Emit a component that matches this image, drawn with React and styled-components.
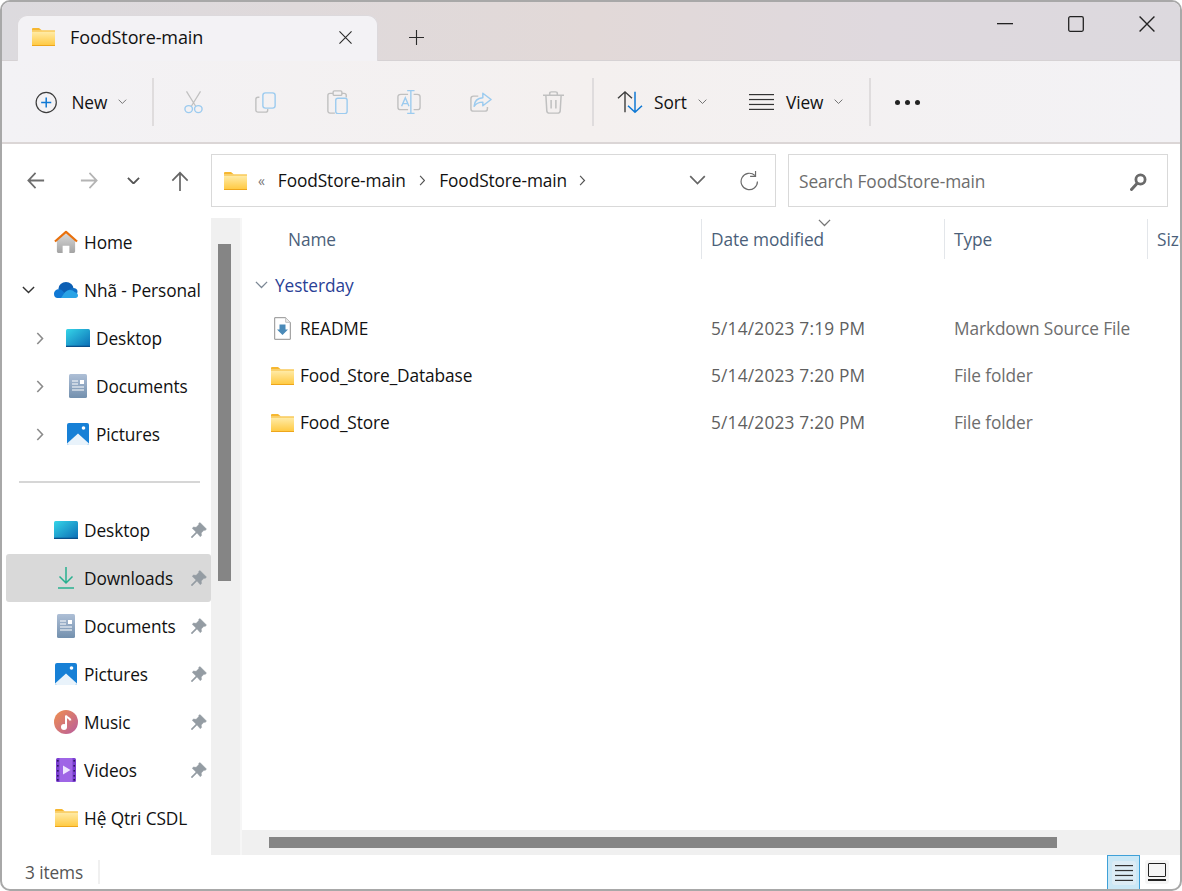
import styled, { createGlobalStyle } from "styled-components";

const GlobalStyle = createGlobalStyle`
  html, body {
    margin: 0;
    padding: 0;
    background: #fff;
  }
  * {
    box-sizing: border-box;
  }
`;

/* ---------- icons ---------- */

let uid = 0;

function Folder({ w = 23, h = 18 }) {
  const id = `folder${uid++}`;
  return (
    <svg width={w} height={h} viewBox="0 0 23 18">
      <defs>
        <linearGradient id={id} x1="0" y1="0" x2="0" y2="1">
          <stop offset="0" stopColor="#ffeeb0" />
          <stop offset="1" stopColor="#ffc83d" />
        </linearGradient>
      </defs>
      <path d="M0 1a1 1 0 0 1 1-1h6l3 2.5H0z" fill="#f6b730" />
      <rect x="0" y="2.5" width="23" height="15.5" rx="0.5" fill={`url(#${id})`} />
      <rect x="0" y="2.5" width="23" height="1" fill="#f6b730" />
      <rect x="0" y="17" width="23" height="1" fill="#eea61b" />
    </svg>
  );
}

function Close({ size = 14, color = "#2a2a2a" }) {
  return (
    <svg width={size} height={size} viewBox="0 0 14 14">
      <path d="M.5.5l13 13M13.5.5l-13 13" stroke={color} strokeWidth="1.2" fill="none" />
    </svg>
  );
}

function Caret({ size = 10, color = "#666", sw = 1 }) {
  return (
    <svg width={size} height={size * 0.6} viewBox="0 0 10 6">
      <path d="M.7.7L5 5l4.3-4.3" stroke={color} strokeWidth={sw} fill="none" />
    </svg>
  );
}

function CaretRight({ color = "#8b8b8b", sw = 1.6, h = 13 }) {
  return (
    <svg width={h * 0.6} height={h} viewBox="0 0 6 10">
      <path d="M1 .8L5 5 1 9.2" stroke={color} strokeWidth={sw * 0.77} fill="none" />
    </svg>
  );
}

const NewIcon = () => (
  <svg width="23" height="23" viewBox="0 0 24 24">
    <circle cx="12" cy="12" r="10.8" fill="none" stroke="#3d3d3d" strokeWidth="1.3" />
    <path d="M12 6.6v10.8M6.6 12h10.8" stroke="#0f78d4" strokeWidth="1.6" />
  </svg>
);

const G = "#c0c0c0";
const B = "#9ccbef";

const CutIcon = () => (
  <svg width="21" height="23" viewBox="0 0 24 28" preserveAspectRatio="none">
    <path d="M4 .5l10.5 18M20 .5L9.5 18.5" stroke={G} strokeWidth="1.4" fill="none" />
    <circle cx="6.5" cy="22" r="4.3" fill="none" stroke={B} strokeWidth="1.6" />
    <circle cx="17.5" cy="22" r="4.3" fill="none" stroke={B} strokeWidth="1.6" />
  </svg>
);

const CopyIcon = () => (
  <svg width="21" height="21" viewBox="0 0 24 26" preserveAspectRatio="none">
    <path d="M5 6.5H3.5A2.5 2.5 0 0 0 1 9v13.5A2.5 2.5 0 0 0 3.5 25H12a2.5 2.5 0 0 0 2.5-2.5V21" fill="none" stroke={G} strokeWidth="1.6" />
    <rect x="9" y="1" width="14" height="19" rx="3" fill="none" stroke={B} strokeWidth="1.6" />
  </svg>
);

const PasteIcon = () => (
  <svg width="21" height="24" viewBox="0 0 24 29" preserveAspectRatio="none">
    <path d="M7 4H3.5A2.5 2.5 0 0 0 1 6.5v19A2.5 2.5 0 0 0 3.5 28H9M17 4h2.5A2.5 2.5 0 0 1 22 6.5V9" fill="none" stroke={G} strokeWidth="1.6" />
    <rect x="7" y="1" width="10" height="5.5" rx="1.5" fill="none" stroke={G} strokeWidth="1.6" />
    <rect x="10" y="10" width="13" height="18.5" rx="2.5" fill="none" stroke={B} strokeWidth="1.6" />
  </svg>
);

const RenameIcon = () => (
  <svg width="24" height="24" viewBox="0 0 26 28" preserveAspectRatio="none">
    <path d="M12 5H4a3 3 0 0 0-3 3v12a3 3 0 0 0 3 3h8M18 5h4a3 3 0 0 1 3 3v12a3 3 0 0 1-3 3h-4" fill="none" stroke={G} strokeWidth="1.5" />
    <path d="M11 .7h8M11 27.3h8M15 .7v26.6" fill="none" stroke={B} strokeWidth="1.5" />
    <path d="M5 19l4-10 4 10M6.3 16h5.4" fill="none" stroke={B} strokeWidth="1.5" />
  </svg>
);

const ShareIcon = () => (
  <svg width="22" height="20" viewBox="0 0 24 24" preserveAspectRatio="none">
    <path d="M9 5H4a3 3 0 0 0-3 3v12a3 3 0 0 0 3 3h12a3 3 0 0 0 3-3v-2" fill="none" stroke={G} strokeWidth="1.6" />
    <path d="M14 1.500l9 7.500-9 7.500v-4.300c-4.500 0-7.500 1.500-9.500 5 .3-6 3.500-10 9.500-10.300z" fill="none" stroke={B} strokeWidth="1.6" strokeLinejoin="round" />
  </svg>
);

const DeleteIcon = () => (
  <svg width="21" height="23" viewBox="0 0 22 27" preserveAspectRatio="none">
    <path d="M0 5h22M7 5V3a2 2 0 0 1 2-2h4a2 2 0 0 1 2 2v2M3 5l1 18.500A3 3 0 0 0 7 26h8a3 3 0 0 0 3-2.500L19 5M8.500 10.500v10M13.500 10.500v10" fill="none" stroke={G} strokeWidth="1.6" />
  </svg>
);

const SortIcon = () => (
  <svg width="26" height="24" viewBox="0 0 26 26" preserveAspectRatio="none">
    <path d="M8 24V2M1 9l7-7 7 7" fill="none" stroke="#3d3d3d" strokeWidth="1.4" />
    <path d="M18 2v22M11 17l7 7 7-7" fill="none" stroke="#0f78d4" strokeWidth="1.5" />
  </svg>
);

const LinesIcon = ({ w = 25, h = 16, rows = 4 }) => (
  <svg width={w} height={h} viewBox={`0 0 ${w} ${h}`}>
    {Array.from({ length: rows }).map((_, i) => (
      <rect key={i} x="0" y={(i * (h - 1.2)) / (rows - 1)} width={w} height="1.2" fill="#333" />
    ))}
  </svg>
);

const ArrowLeft = ({ color }) => (
  <svg width="18" height="17" viewBox="0 0 20 18" preserveAspectRatio="none">
    <path d="M19 9H1.500M9.500 1L1.500 9l8 8" fill="none" stroke={color} strokeWidth="1.9" />
  </svg>
);

const ArrowRight = ({ color }) => (
  <svg width="18" height="17" viewBox="0 0 20 18" preserveAspectRatio="none">
    <path d="M1 9h17.500M10.500 1l8 8-8 8" fill="none" stroke={color} strokeWidth="1.9" />
  </svg>
);

const ArrowUp = () => (
  <svg width="18" height="20" viewBox="0 0 20 22" preserveAspectRatio="none">
    <path d="M10 22V2M1.500 10.500L10 2l8.500 8.500" fill="none" stroke="#666" strokeWidth="1.9" />
  </svg>
);

const Refresh = () => (
  <svg width="20" height="20" viewBox="0 0 21 22">
    <path d="M17 5a9 9 0 1 0 2.800 6.500" fill="none" stroke="#6b6b6b" strokeWidth="1.300" />
    <path d="M17.700 0v6h-6" fill="none" stroke="#6b6b6b" strokeWidth="1.300" />
  </svg>
);

const SearchIcon = () => (
  <svg width="17" height="18" viewBox="0 0 17 18">
    <circle cx="10.500" cy="6.500" r="4.600" fill="none" stroke="#6a6a6a" strokeWidth="2.800" />
    <path d="M7 10.500l-5.500 6" stroke="#6a6a6a" strokeWidth="3" strokeLinecap="round" />
  </svg>
);

const HomeIcon = () => (
  <svg width="25" height="24" viewBox="0 0 25 24">
    <defs>
      <linearGradient id="homeG" x1="0" y1="0" x2="0" y2="1">
        <stop offset="0" stopColor="#d8d8d8" />
        <stop offset="1" stopColor="#a3a3a3" />
      </linearGradient>
    </defs>
    <path d="M3 10.500L12.500 3 22 10.500V22a1.500 1.500 0 0 1-1.500 1.500H16V16h-7v7.500H4.500A1.500 1.500 0 0 1 3 22z" fill="url(#homeG)" />
    <path d="M1 11.500L12.500 1.500 24 11.500" fill="none" stroke="#e8700d" strokeWidth="2.300" strokeLinejoin="round" />
  </svg>
);

const CloudIcon = () => (
  <svg width="24" height="16" viewBox="0 0 24 16">
    <ellipse cx="12" cy="6.500" rx="7.500" ry="6.500" fill="#0c5fb4" />
    <ellipse cx="19" cy="9.500" rx="4.500" ry="3.500" fill="#0f6fc6" />
    <path d="M0 12c0-3 2.500-5 5-4.800 1.500 0 3 .8 4 2l5 6.800H3.500C1.500 16 0 14.500 0 12z" fill="#0f78d4" />
    <path d="M7 16l3-4.500c1-1.500 3-3.500 6-3.500 2 0 3.500.8 4.500 2 2 .2 3.500 1.800 3.500 3.500 0 1.500-1 2.500-2.500 2.500z" fill="#29a3e6" />
  </svg>
);

const DesktopIcon = () => (
  <svg width="24" height="18" viewBox="0 0 24 18">
    <defs>
      <linearGradient id="deskG" x1="0" y1="0" x2="1" y2="1">
        <stop offset="0" stopColor="#35d5e8" />
        <stop offset="1" stopColor="#0b6cb5" />
      </linearGradient>
    </defs>
    <rect width="24" height="18" rx="1.500" fill="url(#deskG)" />
    <rect y="16.700" width="24" height="1.300" fill="#0a4f8a" />
  </svg>
);

const DownloadIcon = () => (
  <svg width="16" height="22" viewBox="0 0 16 22">
    <path d="M8 0v15.500M1.500 9.500L8 16l6.500-6.500" fill="none" stroke="#27b08f" strokeWidth="1.500" />
    <path d="M0 21h16" stroke="#27b08f" strokeWidth="1.500" />
  </svg>
);

const DocumentsIcon = () => (
  <svg width="18" height="24" viewBox="0 0 18 24">
    <defs>
      <linearGradient id="docG" x1="0" y1="0" x2="0" y2="1">
        <stop offset="0" stopColor="#aebfd6" />
        <stop offset="1" stopColor="#7390ae" />
      </linearGradient>
    </defs>
    <rect width="18" height="24" rx="1.500" fill="url(#docG)" />
    <path d="M3 7h6M3 10h6M3 13h12M3 16h12" stroke="#fff" strokeWidth="1" />
    <rect x="11" y="6" width="4" height="4" fill="#fff" />
  </svg>
);

const PicturesIcon = () => (
  <svg width="22" height="22" viewBox="0 0 22 22">
    <rect width="22" height="22" rx="2" fill="#1780d6" />
    <path d="M0 20.500L11 10.500 22 20.500V20a2 2 0 0 1-2 2H2a2 2 0 0 1-2-2z" fill="#e9f3fb" />
    <circle cx="16.500" cy="5" r="1.800" fill="#fff" />
  </svg>
);

const MusicIcon = () => (
  <svg width="24" height="24" viewBox="0 0 24 24">
    <defs>
      <linearGradient id="musG" x1="0" y1="0" x2="1" y2="1">
        <stop offset="0" stopColor="#f0904e" />
        <stop offset="1" stopColor="#b85c9e" />
      </linearGradient>
    </defs>
    <circle cx="12" cy="12" r="12" fill="url(#musG)" />
    <circle cx="10" cy="17" r="3" fill="#fff" />
    <path d="M12 17V5.500c1 2.500 4 2.500 4.500 5" fill="none" stroke="#fff" strokeWidth="2" />
  </svg>
);

const VideosIcon = () => (
  <svg width="20" height="24" viewBox="0 0 20 24">
    <rect width="20" height="24" rx="1.500" fill="#7a3fd0" />
    <rect x="3.500" width="13" height="24" fill="#9f66e6" />
    {[2, 7, 12, 17, 21].map((y) => (
      <g key={y}>
        <rect x="1" y={y} width="1.600" height="1.600" fill="#2d1560" />
        <rect x="17.400" y={y} width="1.600" height="1.600" fill="#2d1560" />
      </g>
    ))}
    <path d="M7 7.500l7.500 4.500L7 16.500z" fill="#efe6ff" />
  </svg>
);

const PinIcon = () => (
  <svg width="16" height="16" viewBox="0 0 16 16">
    <path d="M9 .5l6.500 6.500-1.300 1.400-1.200-.2-2.700 2.700.3 2.600-1.300 1.300L6 11 1 16l-1-1 5-5-3.800-3.700L2.500 5l2.600.3 2.700-2.700-.2-1z" fill="#949ca3" stroke="#949ca3" strokeWidth=".4" />
  </svg>
);

const ReadmeIcon = () => (
  <svg width="17" height="23" viewBox="0 0 17 23">
    <path d="M.7.7h11l4.600 4.600v17H.7z" fill="#fff" stroke="#8f8f8f" strokeWidth="1" />
    <path d="M11.700.7v4.600h4.600" fill="#eee" stroke="#bdbdbd" strokeWidth="1" />
    <path d="M5.500 7.500h6v5h2.500L8.500 18 3 12.500h2.500z" fill="#4a8ab8" />
  </svg>
);

/* ---------- window chrome ---------- */

const Window = styled.div`
  width: 1182px;
  height: 891px;
  display: flex;
  flex-direction: column;
  overflow: hidden;
  background: #fff;
  border: 2px solid #a8a8a8;
  border-radius: 10px;
  color: #111;
  font-family: "Open Sans", "Noto Sans", sans-serif;
  font-size: 17.3px;
  letter-spacing: -0.1px;
`;

const TitleBar = styled.div`
  flex: none;
  height: 59px;
  display: flex;
  align-items: flex-end;
  padding-left: 15px;
  background: linear-gradient(90deg, #dcdade 0%, #e2d9d8 50%, #dfd9de 75%, #dcd9de 100%);
  border-bottom: 1px solid #d6d2d4;
`;

const Tab = styled.div`
  width: 361px;
  height: 46px;
  margin-bottom: -1px;
  display: flex;
  align-items: center;
  padding: 0 25px 3px 14px;
  background: #f3f2f5;
  border: 1px solid #dcd9dc;
  border-bottom: none;
  border-radius: 10px 10px 0 0;
  font-size: 18px;
`;

const TabTitle = styled.span`
  flex: 1;
  margin-left: 15px;
`;

const NewTab = styled.div`
  width: 76px;
  height: 46px;
  display: flex;
  align-items: center;
  justify-content: center;
`;

const Controls = styled.div`
  margin-left: auto;
  align-self: flex-start;
  display: flex;
  align-items: center;
  gap: 55px;
  height: 44px;
  padding-right: 25px;
`;

const Control = styled.div`
  width: 16px;
  display: flex;
  justify-content: center;
`;

const Toolbar = styled.div`
  flex: none;
  height: 83px;
  display: flex;
  align-items: center;
  padding: 1px 0 0 33px;
  background: linear-gradient(90deg, #f3f2f5 0%, #f4f0ef 50%, #f3f2f5 100%);
  border-bottom: 2px solid #dbd6d6;
`;

const ToolLabel = styled.span`
  margin-left: ${(p) => p.$gap}px;
  margin-right: 11px;
`;

const ToolGroup = styled.div`
  display: flex;
  align-items: center;
  width: ${(p) => p.$w}px;
`;

const ToolDivider = styled.div`
  width: 2px;
  height: 48px;
  background: #dfdcdd;
  margin: ${(p) => p.$m};
`;

const ToolIcon = styled.div`
  width: 72px;
  height: 48px;
  display: flex;
  align-items: center;
  justify-content: center;
`;

const Dots = styled.div`
  display: flex;
  gap: 5px;
  margin-left: 24px;
  span {
    width: 5px;
    height: 5px;
    border-radius: 50%;
    background: #222;
  }
`;

/* ---------- address row ---------- */

const AddressRow = styled.div`
  flex: none;
  height: 74px;
  display: flex;
  align-items: flex-start;
  padding-top: 10px;
`;

const NavButtons = styled.div`
  width: 209px;
  height: 53px;
  display: flex;
  align-items: center;
`;

const NavButton = styled.div`
  width: ${(p) => p.$w}px;
  margin-left: ${(p) => p.$ml || 0}px;
  display: flex;
  justify-content: center;
`;

const AddressBox = styled.div`
  width: 565px;
  height: 53px;
  display: flex;
  align-items: center;
  padding-left: 12px;
  background: #fff;
  border: 1.5px solid #d9d9d9;
`;

const Crumb = styled.span`
  margin: 0 ${(p) => p.$mr}px 0 ${(p) => p.$ml}px;
`;

const CrumbOverflow = styled.span`
  margin: 0 13px 0 11px;
  color: #777;
  font-size: 14px;
`;

const AddressEnd = styled.div`
  margin-left: auto;
  display: flex;
  align-items: center;
  gap: 33px;
  padding-right: 16px;
`;

const SearchBox = styled.div`
  width: 380px;
  height: 53px;
  margin-left: 12px;
  display: flex;
  align-items: center;
  justify-content: space-between;
  padding: 2px 20px 0 10px;
  color: #6d6d6d;
  border: 1.5px solid #d9d9d9;
`;

/* ---------- main area ---------- */

const Main = styled.div`
  flex: 1;
  min-height: 0;
  display: flex;
`;

const Sidebar = styled.div`
  width: 209px;
  flex: none;
  overflow: hidden;
`;

const NavRow = styled.div`
  height: 48px;
  margin-left: 4px;
  width: 205px;
  display: flex;
  align-items: center;
  border-radius: 3px;
  padding-left: ${(p) => 14 + p.$level * 12}px;
  background: ${(p) => (p.$selected ? "#d9d9d9" : "transparent")};
`;

const NavCaret = styled.div`
  width: 16px;
  flex: none;
  display: flex;
  justify-content: center;
`;

const NavIcon = styled.div`
  width: 24px;
  margin-left: 18px;
  flex: none;
  display: flex;
  justify-content: center;
`;

const NavLabel = styled.span`
  margin-left: 6px;
  flex: 1;
  white-space: nowrap;
`;

const NavPin = styled.div`
  width: 16px;
  margin-right: 4px;
  display: flex;
`;

const NavDivider = styled.div`
  height: 48px;
  display: flex;
  align-items: center;
  padding-left: 17px;
  &::after {
    content: "";
    width: 181px;
    height: 2px;
    background: #d6d6d6;
  }
`;

const VTrack = styled.div`
  width: 29px;
  flex: none;
  padding: 26px 9px 0 7px;
  background: #f0f0f0;
`;

const VThumb = styled.div`
  height: 337px;
  background: #858585;
`;

const Content = styled.div`
  flex: 1;
  min-width: 0;
  display: flex;
  flex-direction: column;
  border-left: 2px solid #f6f6f6;
`;

const Columns = styled.div`
  display: grid;
  grid-template-columns: 459px 243px 203px 1fr;
  height: ${(p) => p.$h}px;
  align-items: center;
  flex: none;
`;

const HeadCell = styled.div`
  height: 40px;
  display: flex;
  align-items: center;
  position: relative;
  padding-left: ${(p) => p.$pl || 9}px;
  color: #4b5f7a;
  border-left: ${(p) => (p.$first ? "none" : "1px solid #e3e6ea")};
  white-space: nowrap;
  overflow: hidden;
`;

const SortMark = styled.div`
  position: absolute;
  top: 0;
  left: 116px;
  line-height: 0;
`;

const GroupRow = styled.div`
  flex: none;
  height: 40px;
  margin-top: 5px;
  display: flex;
  align-items: center;
  padding-left: 13px;
  gap: 7px;
  color: #2a3f96;
`;

const NameCell = styled.div`
  display: flex;
  align-items: center;
  padding-left: 29px;
  white-space: nowrap;
`;

const FileIcon = styled.div`
  width: 23px;
  display: flex;
  justify-content: center;
  margin-right: 6px;
`;

const MetaCell = styled.div`
  padding-left: 10px;
  color: #6d6d6d;
  white-space: nowrap;
`;

const DateCell = styled(MetaCell)`
  color: #5f5f5f;
  letter-spacing: 0.2px;
`;

const Spacer = styled.div`
  flex: 1;
`;

const HTrack = styled.div`
  flex: none;
  height: 25px;
  padding: 7px 0 7px 27px;
  background: #f0f0f0;
`;

const HThumb = styled.div`
  width: 788px;
  height: 11px;
  background: #858585;
`;

const StatusBar = styled.div`
  flex: none;
  height: 34px;
  display: flex;
  align-items: center;
  padding-left: 23px;
  color: #555;
`;

const StatusDivider = styled.div`
  width: 2px;
  height: 24px;
  margin-left: 15px;
  background: #f0f0f0;
`;

const ViewButtons = styled.div`
  margin-left: auto;
  margin-right: 11px;
  height: 100%;
  display: flex;
  align-items: center;
  gap: 5px;
`;

const ViewToggle = styled.div`
  width: 33px;
  height: 34px;
  display: flex;
  align-items: center;
  justify-content: center;
  background: #cbe8f6;
  border: 1.5px solid #3fa1d8;
  border-bottom: none;
  div {
    width: 24px;
    height: 24px;
    display: flex;
    align-items: center;
    justify-content: center;
    border-radius: 3px;
    background: #dcecf5;
  }
`;

const ViewPlain = styled.div`
  width: 24px;
  height: 24px;
  display: flex;
  flex-direction: column;
  align-items: center;
  justify-content: center;
  gap: 2px;
  border-radius: 3px;
  background: #f5f5f5;
  i {
    width: 18px;
    height: 14px;
    border: 1.3px solid #222;
    border-radius: 1px;
  }
  b {
    width: 18px;
    height: 1.3px;
    background: #222;
  }
`;

/* ---------- data ---------- */

const navTop = [
  { icon: <HomeIcon />, label: "Home", level: 0 },
  { icon: <CloudIcon />, label: "Nhã - Personal", level: 0, caret: "open" },
  { icon: <DesktopIcon />, label: "Desktop", level: 1, caret: "closed" },
  { icon: <DocumentsIcon />, label: "Documents", level: 1, caret: "closed" },
  { icon: <PicturesIcon />, label: "Pictures", level: 1, caret: "closed" },
];

const navPinned = [
  { icon: <DesktopIcon />, label: "Desktop", pin: true },
  { icon: <DownloadIcon />, label: "Downloads", pin: true, selected: true },
  { icon: <DocumentsIcon />, label: "Documents", pin: true },
  { icon: <PicturesIcon />, label: "Pictures", pin: true },
  { icon: <MusicIcon />, label: "Music", pin: true },
  { icon: <VideosIcon />, label: "Videos", pin: true },
  { icon: <Folder />, label: "Hệ Qtri CSDL" },
];

const files = [
  { icon: <ReadmeIcon />, name: "README", date: "5/14/2023 7:19 PM", type: "Markdown Source File" },
  { icon: <Folder />, name: "Food_Store_Database", date: "5/14/2023 7:20 PM", type: "File folder" },
  { icon: <Folder />, name: "Food_Store", date: "5/14/2023 7:20 PM", type: "File folder" },
];

function NavItem({ item }) {
  return (
    <NavRow $level={item.level || 0} $selected={item.selected}>
      <NavCaret>
        {item.caret === "open" && <Caret size={13} color="#333" sw={1.1} />}
        {item.caret === "closed" && <CaretRight />}
      </NavCaret>
      <NavIcon>{item.icon}</NavIcon>
      <NavLabel>{item.label}</NavLabel>
      {item.pin && (
        <NavPin>
          <PinIcon />
        </NavPin>
      )}
    </NavRow>
  );
}

export default function App() {
  return (
    <>
      <GlobalStyle />
      <Window>
        <TitleBar>
          <Tab>
            <Folder />
            <TabTitle>FoodStore-main</TabTitle>
            <Close size={13} />
          </Tab>
          <NewTab>
            <svg width="15" height="15" viewBox="0 0 16 16">
              <path d="M8 0v16M0 8h16" stroke="#2a2a2a" strokeWidth="1.200" />
            </svg>
          </NewTab>
          <Controls>
            <Control>
              <svg width="16" height="2" viewBox="0 0 16 2">
                <rect width="16" height="1.300" fill="#222" />
              </svg>
            </Control>
            <Control>
              <svg width="16" height="16" viewBox="0 0 16 16">
                <rect x=".7" y=".7" width="14.600" height="14.600" rx="1.500" fill="none" stroke="#222" strokeWidth="1.300" />
              </svg>
            </Control>
            <Control>
              <Close size={16} color="#222" />
            </Control>
          </Controls>
        </TitleBar>

        <Toolbar>
          <ToolGroup $w={92}>
            <NewIcon />
            <ToolLabel $gap={14}>New</ToolLabel>
            <Caret size={9} />
          </ToolGroup>
          <ToolDivider $m="0 3px 0 25px" />
          <ToolIcon><CutIcon /></ToolIcon>
          <ToolIcon><CopyIcon /></ToolIcon>
          <ToolIcon><PasteIcon /></ToolIcon>
          <ToolIcon><RenameIcon /></ToolIcon>
          <ToolIcon><ShareIcon /></ToolIcon>
          <ToolIcon><DeleteIcon /></ToolIcon>
          <ToolDivider $m="0 23px 0 3px" />
          <ToolGroup $w={132}>
            <SortIcon />
            <ToolLabel $gap={11}>Sort</ToolLabel>
            <Caret size={9} />
          </ToolGroup>
          <ToolGroup $w={120}>
            <LinesIcon />
            <ToolLabel $gap={12}>View</ToolLabel>
            <Caret size={9} />
          </ToolGroup>
          <ToolDivider $m="0" />
          <Dots>
            <span />
            <span />
            <span />
          </Dots>
        </Toolbar>

        <AddressRow>
          <NavButtons>
            <NavButton $w={20} $ml={24}><ArrowLeft color="#6e6e6e" /></NavButton>
            <NavButton $w={20} $ml={33}><ArrowRight color="#b4b4b4" /></NavButton>
            <NavButton $w={14} $ml={27}><Caret size={13} color="#555" sw={1.4} /></NavButton>
            <NavButton $w={20} $ml={30}><ArrowUp /></NavButton>
          </NavButtons>
          <AddressBox>
            <Folder />
            <CrumbOverflow>«</CrumbOverflow>
            <Crumb $ml={0} $mr={13}>FoodStore-main</Crumb>
            <CaretRight color="#555" sw={1.4} h={11} />
            <Crumb $ml={14} $mr={12}>FoodStore-main</Crumb>
            <CaretRight color="#555" sw={1.4} h={11} />
            <AddressEnd>
              <Caret size={17} color="#666" />
              <Refresh />
            </AddressEnd>
          </AddressBox>
          <SearchBox>
            <span>Search FoodStore-main</span>
            <SearchIcon />
          </SearchBox>
        </AddressRow>

        <Main>
          <Sidebar>
            {navTop.map((item, i) => (
              <NavItem item={item} key={i} />
            ))}
            <NavDivider />
            {navPinned.map((item, i) => (
              <NavItem item={item} key={i} />
            ))}
          </Sidebar>
          <VTrack>
            <VThumb />
          </VTrack>
          <Content>
            <Columns $h={42}>
              <HeadCell $first $pl={46}>Name</HeadCell>
              <HeadCell>
                Date modified
                <SortMark><Caret size={13} color="#777" /></SortMark>
              </HeadCell>
              <HeadCell>Type</HeadCell>
              <HeadCell>Size</HeadCell>
            </Columns>
            <GroupRow>
              <Caret size={13} color="#7b8794" />
              Yesterday
            </GroupRow>
            {files.map((f, i) => (
              <Columns $h={47} key={i}>
                <NameCell>
                  <FileIcon>{f.icon}</FileIcon>
                  {f.name}
                </NameCell>
                <DateCell>{f.date}</DateCell>
                <MetaCell>{f.type}</MetaCell>
              </Columns>
            ))}
            <Spacer />
            <HTrack>
              <HThumb />
            </HTrack>
          </Content>
        </Main>

        <StatusBar>
          3 items
          <StatusDivider />
          <ViewButtons>
            <ViewToggle>
              <div>
                <LinesIcon w={18} h={16} rows={4} />
              </div>
            </ViewToggle>
            <ViewPlain>
              <i />
              <b />
            </ViewPlain>
          </ViewButtons>
        </StatusBar>
      </Window>
    </>
  );
}
